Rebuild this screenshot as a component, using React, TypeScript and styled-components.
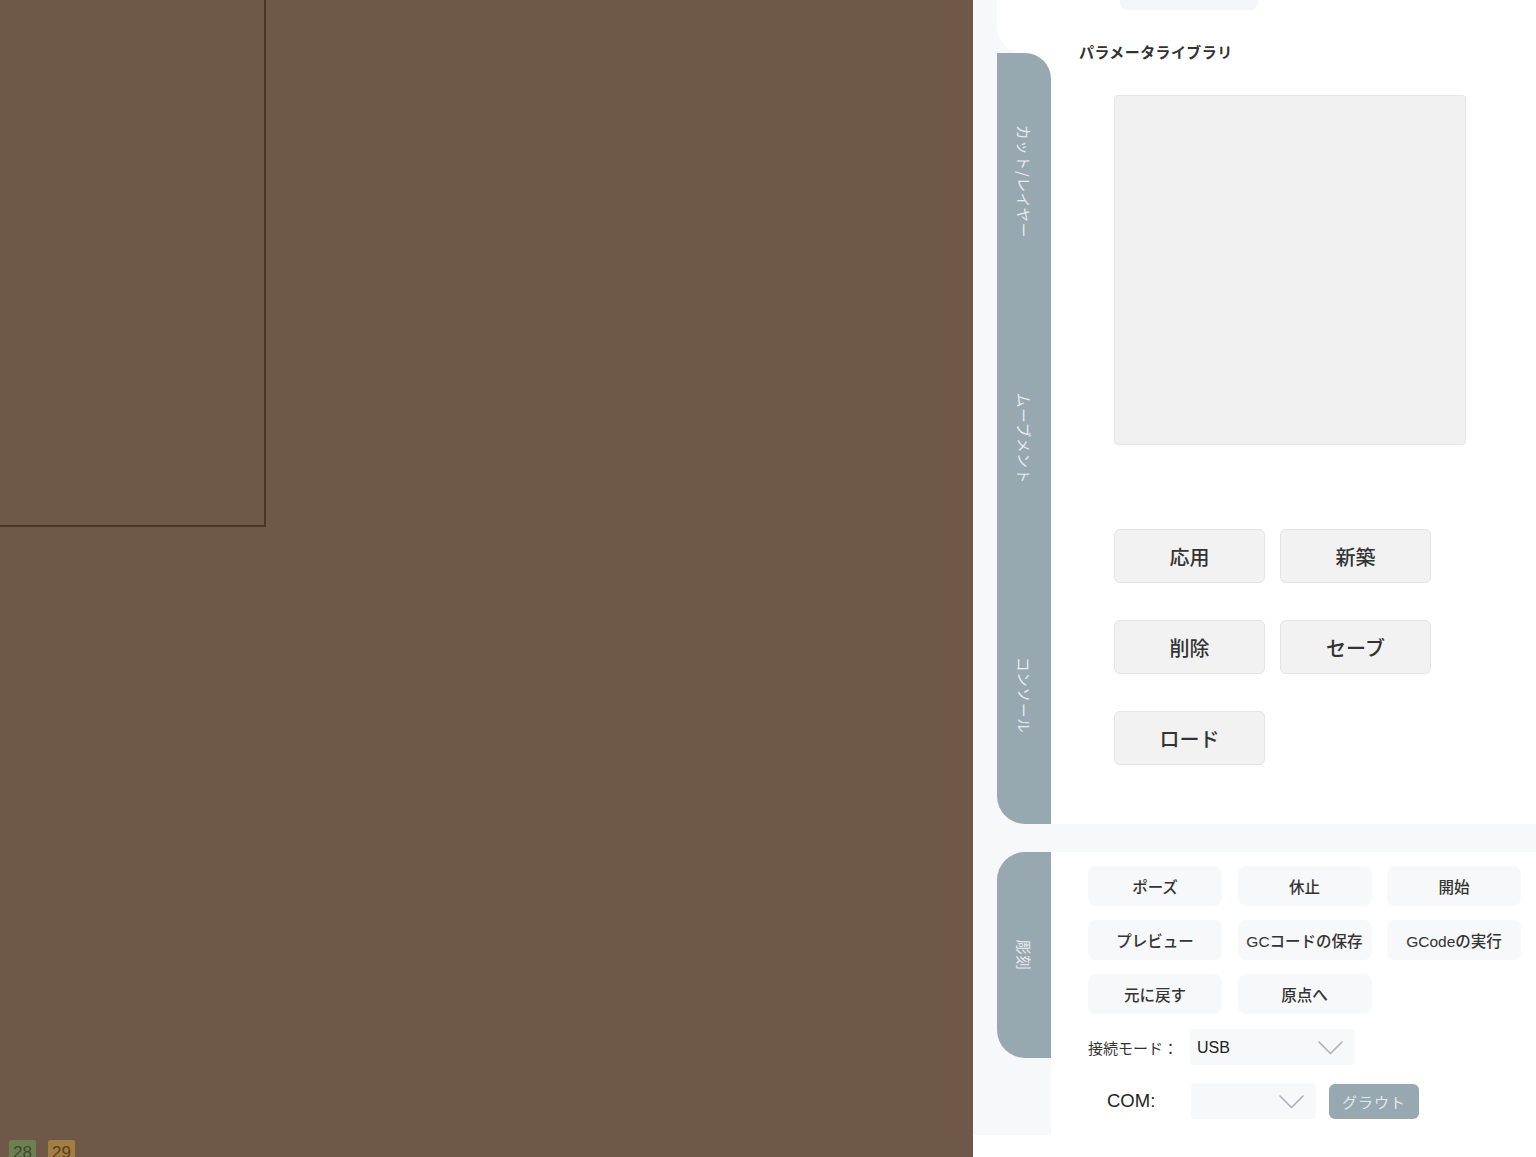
import styled, { createGlobalStyle } from "styled-components";

const GlobalStyle = createGlobalStyle`
  html, body {
    margin: 0;
    padding: 0;
  }

  body {
    font-family: "Liberation Sans", "Noto Sans CJK JP", sans-serif;
    color: #333;
  }

  * {
    box-sizing: border-box;
  }
`;

const Page = styled.div`
  display: flex;
  width: 1536px;
  height: 1157px;
  overflow: hidden;
`;

const Canvas = styled.main`
  position: relative;
  flex-shrink: 0;
  width: 973px;
  height: 100%;
  background: #705848;
  overflow: hidden;
`;

const WorkArea = styled.div`
  width: 266px;
  height: 527px;
  border-right: 2px solid #4b3426;
  border-bottom: 2px solid #4b3426;
`;

// layer badges peeking in at the bottom edge of the canvas
const BadgeRow = styled.div`
  position: absolute;
  left: 9px;
  bottom: -7px;
  display: flex;
  gap: 12px;
`;

const Badge = styled.span<{ $tone: "green" | "orange" }>`
  display: flex;
  align-items: center;
  justify-content: center;
  width: 27px;
  height: 24px;
  border-radius: 2px;
  font-size: 17px;
  line-height: 1;
  background: ${(p) => (p.$tone === "green" ? "#6e8052" : "#a17e42")};
  color: ${(p) => (p.$tone === "green" ? "#3b4830" : "#5b3d1c")};
`;

const Panel = styled.aside`
  flex: 1;
  display: flex;
  flex-direction: column;
  background: #fff;
`;

const TopSection = styled.section`
  display: flex;
  height: 824px;
`;

const Rail = styled.nav`
  display: flex;
  flex-direction: column;
  flex-shrink: 0;
  width: 78px;
  padding-left: 24px;
  background: #f7f8fa;
`;

const ActiveTab = styled.div`
  flex-shrink: 0;
  height: 53px;
  background: #fff;
  border-bottom-left-radius: 26px;
`;

const TabStack = styled.div`
  flex: 1;
  display: flex;
  background: linear-gradient(to right, #f7f8fa 50%, #fff 50%);
`;

const TabGroup = styled.div`
  flex: 1;
  display: flex;
  flex-direction: column;
  background: #98a8b1;
  border-top-right-radius: 26px;
  border-bottom-left-radius: 28px;
`;

const Tab = styled.div`
  flex: 1;
  display: flex;
  align-items: center;
  justify-content: center;
`;

const TabLabel = styled.span`
  writing-mode: vertical-rl;
  text-orientation: sideways;
  font-family: "Noto Sans CJK JP", sans-serif;
  font-size: 14.5px;
  letter-spacing: 0.8px;
  color: #e8edf0;
`;

const Content = styled.div`
  flex: 1;
  padding-left: 28px;
  background: #fff;
`;

const TopStub = styled.div`
  width: 138px;
  height: 10px;
  margin-left: 41px;
  background: #f3f5f8;
  border-radius: 0 0 8px 8px;
`;

const Title = styled.h2`
  margin: 32px 0 0;
  font-family: "Noto Sans CJK JP", sans-serif;
  font-size: 15px;
  font-weight: 700;
  line-height: 20px;
  letter-spacing: 0.4px;
  color: #333;
`;

const LibraryBox = styled.div`
  width: 352px;
  height: 350px;
  margin: 33px 0 0 35px;
  background: #f1f1f1;
  border: 1px solid #e6e6e6;
  border-radius: 4px;
`;

const ParamGrid = styled.div`
  display: grid;
  grid-template-columns: repeat(2, 151px);
  column-gap: 15px;
  row-gap: 37px;
  margin: 84px 0 0 35px;
`;

const ParamButton = styled.button`
  height: 54px;
  padding: 0;
  background: #f2f2f2;
  border: 1px solid #e4e4e4;
  border-radius: 6px;
  font-family: "Noto Sans CJK JP", sans-serif;
  font-size: 20px;
  font-weight: 500;
  color: #333;
`;

const Divider = styled.div`
  flex-shrink: 0;
  height: 28px;
  background: #f7f8fa;
`;

const BottomSection = styled.section`
  display: flex;
  height: 283px;
`;

const BottomRail = styled(Rail)``;

const EngraveTab = styled.div`
  display: flex;
  align-items: center;
  justify-content: center;
  height: 206px;
  background: #98a8b1;
  border-radius: 28px 0 0 28px;
`;

const BottomContent = styled.div`
  flex: 1;
  padding: 14px 0 0 37px;
  background: #fff;
`;

const ActionGrid = styled.div`
  display: grid;
  grid-template-columns: repeat(3, 134px);
  column-gap: 15.5px;
  row-gap: 14px;
`;

const ActionButton = styled.button`
  height: 40px;
  padding: 0;
  background: #f7f8fa;
  border: none;
  border-radius: 8px;
  font-family: "Liberation Sans", "Noto Sans CJK JP", sans-serif;
  font-size: 15.5px;
  font-weight: 500;
  color: #333;
`;

const FieldRow = styled.div<{ $top: number }>`
  display: flex;
  align-items: center;
  margin-top: ${(p) => p.$top}px;
`;

const FieldLabel = styled.span<{ $large?: boolean }>`
  flex-shrink: 0;
  width: ${(p) => (p.$large ? 103 : 102)}px;
  padding-left: ${(p) => (p.$large ? 19 : 0)}px;
  font-family: "Liberation Sans", "Noto Sans CJK JP", sans-serif;
  font-size: ${(p) => (p.$large ? 18.5 : 15)}px;
  color: ${(p) => (p.$large ? "#1f1f1f" : "#333")};
`;

const Select = styled.div<{ $width: number }>`
  display: flex;
  align-items: center;
  justify-content: space-between;
  width: ${(p) => p.$width}px;
  height: 36px;
  padding: 2px 12px 0 7px;
  background: #f7f8fa;
  border-radius: 4px;
  font-size: 16px;
  color: #222;
`;

const ConnectButton = styled.button`
  width: 90px;
  height: 35px;
  margin-left: 13px;
  padding: 0;
  background: #98a8b1;
  border: none;
  border-radius: 6px;
  font-family: "Noto Sans CJK JP", sans-serif;
  font-size: 15px;
  letter-spacing: 1px;
  color: #e3e8eb;
`;

const Footer = styled.div`
  flex: 1;
  background: #fff;
`;

const Chevron = () => (
  <svg width="25" height="14" viewBox="0 0 25 14" fill="none">
    <polyline
      points="1,1 12.5,12.5 24,1"
      stroke="#a9b2b9"
      strokeWidth="1.6"
      strokeLinejoin="round"
      strokeLinecap="round"
    />
  </svg>
);

const sideTabs = ["カット/レイヤー", "ムーブメント", "コンソール"];
const paramButtons = ["応用", "新築", "削除", "セーブ", "ロード"];
const actions = [
  "ポーズ",
  "休止",
  "開始",
  "プレビュー",
  "GCコードの保存",
  "GCodeの実行",
  "元に戻す",
  "原点へ",
];

export default function App() {
  return (
    <>
      <GlobalStyle />
      <Page>
        <Canvas>
          <WorkArea />
          <BadgeRow>
            <Badge $tone="green">28</Badge>
            <Badge $tone="orange">29</Badge>
          </BadgeRow>
        </Canvas>
        <Panel>
          <TopSection>
            <Rail>
              <ActiveTab />
              <TabStack>
                <TabGroup>
                  {sideTabs.map((t) => (
                    <Tab key={t}>
                      <TabLabel>{t}</TabLabel>
                    </Tab>
                  ))}
                </TabGroup>
              </TabStack>
            </Rail>
            <Content>
              <TopStub />
              <Title>パラメータライブラリ</Title>
              <LibraryBox />
              <ParamGrid>
                {paramButtons.map((b) => (
                  <ParamButton key={b}>{b}</ParamButton>
                ))}
              </ParamGrid>
            </Content>
          </TopSection>
          <Divider />
          <BottomSection>
            <BottomRail>
              <EngraveTab>
                <TabLabel>彫刻</TabLabel>
              </EngraveTab>
            </BottomRail>
            <BottomContent>
              <ActionGrid>
                {actions.map((a) => (
                  <ActionButton key={a}>{a}</ActionButton>
                ))}
              </ActionGrid>
              <FieldRow $top={15}>
                <FieldLabel>接続モード：</FieldLabel>
                <Select $width={165}>
                  <span>USB</span>
                  <Chevron />
                </Select>
              </FieldRow>
              <FieldRow $top={18}>
                <FieldLabel $large>COM:</FieldLabel>
                <Select $width={125}>
                  <span />
                  <Chevron />
                </Select>
                <ConnectButton>グラウト</ConnectButton>
              </FieldRow>
            </BottomContent>
          </BottomSection>
          <Footer />
        </Panel>
      </Page>
    </>
  );
}
